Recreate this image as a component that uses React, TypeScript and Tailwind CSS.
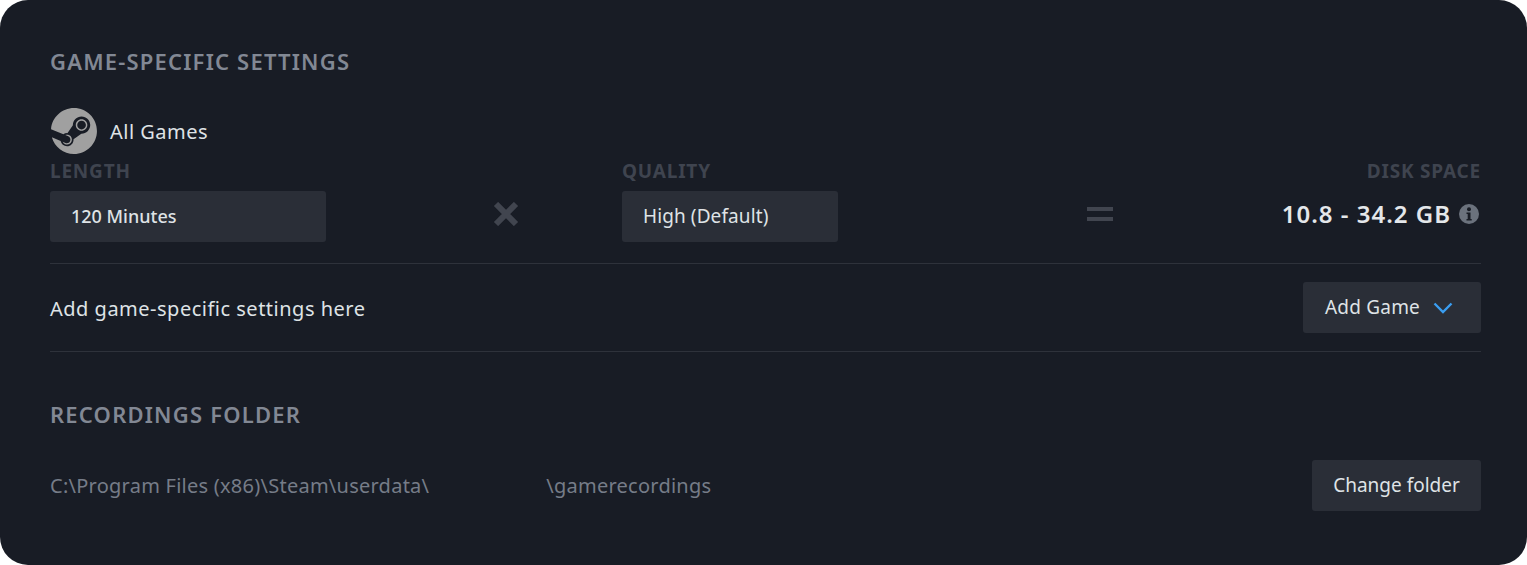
import { SiSteam } from "react-icons/si";

function Label({ children }: { children: React.ReactNode }) {
  return <div className="text-[19px] leading-[24px] font-bold tracking-[0.8px] text-[#3f444f]">{children}</div>;
}

function Heading({ children }: { children: React.ReactNode }) {
  return <h2 className="text-[22px] leading-[28px] font-semibold tracking-[1.2px] text-[#828894]">{children}</h2>;
}

function Box({ className, children }: { className: string; children: React.ReactNode }) {
  return (
    <div className={`h-[51px] flex items-center rounded-[3px] bg-[#2a2e37] text-[#dfe3e6] ${className}`}>
      {children}
    </div>
  );
}

export default function App() {
  return (
    <div className="h-[565px] bg-white font-['Noto_Sans','Open_Sans',sans-serif]">
      <div className="h-full rounded-[28px] bg-[#181c25] pl-[50px] pr-[46px] pt-[47px]">
        <Heading>GAME-SPECIFIC SETTINGS</Heading>

        <div className="mt-[33px] flex items-center gap-[13px] pl-px">
          <SiSteam className="h-[46px] w-[46px] text-[#a0a0a0]" />
          <span className="text-[20px] tracking-[0.5px] text-[#dfe3e6] pt-[2px]">All Games</span>
        </div>

        <div className="mt-[5px] flex items-end border-b border-[#2e323b] pb-[21px]">
          <div className="w-[276px]">
            <Label>LENGTH</Label>
            <Box className="mt-[8px] pl-[21px] text-[18px] font-medium">120 Minutes</Box>
          </div>
          <div className="h-[51px] w-[296px] flex items-center justify-center pl-[64px] pb-[6px]">
            <svg viewBox="0 0 26 24" className="h-[24px] w-[26px]" fill="none" stroke="#41454f" strokeWidth="6">
              <path d="M3 2 23 22M23 2 3 22" />
            </svg>
          </div>
          <div className="w-[216px]">
            <Label>QUALITY</Label>
            <Box className="mt-[8px] pl-[21px] text-[19px] tracking-[0.1px]">High (Default)</Box>
          </div>
          <div className="h-[51px] ml-[249px] flex items-center pb-[5px]">
            <div className="w-[26px] flex flex-col gap-[6px]">
              <div className="h-[4px] bg-[#41454f]" />
              <div className="h-[4px] bg-[#41454f]" />
            </div>
          </div>
          <div className="flex-1 text-right">
            <Label>DISK SPACE</Label>
            <div className="mt-[8px] h-[51px] flex items-center justify-end gap-[8px] pb-[5px]">
              <span className="text-[24px] font-semibold tracking-[1px] text-[#e4e7ea]">10.8 - 34.2 GB</span>
              <svg viewBox="0 0 20 20" className="h-[20px] w-[20px] mr-[2px]">
                <circle cx="10" cy="10" r="10" fill="#6b727d" />
                <circle cx="10" cy="5.2" r="2" fill="#181c25" />
                <path d="M7.5 8.5h4v6.5h1.2v1.6H7.5V15h1.2v-4.9H7.5z" fill="#181c25" />
              </svg>
            </div>
          </div>
        </div>

        <div className="flex items-center justify-between border-b border-[#2e323b] pt-[18px] pb-[18px]">
          <span className="text-[20px] tracking-[0.5px] text-[#dfe3e6] pt-[2px]">Add game-specific settings here</span>
          <Box className="w-[178px] pl-[22px] gap-[13px] text-[19px] tracking-[0.2px]">
            Add Game
            <svg viewBox="0 0 20 12" className="h-[12px] w-[20px]" fill="none" stroke="#3a9df0" strokeWidth="2.4">
              <path d="M1.5 1.5 10 10 18.5 1.5" />
            </svg>
          </Box>
        </div>

        <div className="mt-[48px]">
          <Heading>RECORDINGS FOLDER</Heading>
        </div>

        <div className="mt-[32px] flex items-center justify-between">
          <span className="text-[20px] tracking-[0.25px] text-[#767c88] whitespace-pre">
            C:\Program Files (x86)\Steam\userdata\
            <span className="inline-block w-[117px]" />
            \gamerecordings
          </span>
          <Box className="w-[169px] justify-center text-[19px]">Change folder</Box>
        </div>
      </div>
    </div>
  );
}
